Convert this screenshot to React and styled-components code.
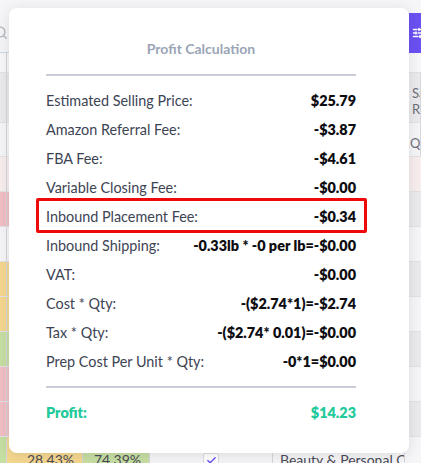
import React from 'react'
import styled, { createGlobalStyle } from 'styled-components'
import { Search, SlidersHorizontal, Check } from 'lucide-react'

const GlobalStyle = createGlobalStyle`
  html, body {
    margin: 0;
    padding: 0;
    background: #f5f5f7;
  }
  body {
    font-family: Lato, "Noto Sans", Arial, sans-serif;
  }
`

const Page = styled.div`
  position: relative;
  width: 421px;
  height: 463px;
  overflow: hidden;
  background: #f6f6f8;
`

const TopBar = styled.div`
  height: 52px;
  display: flex;
  align-items: center;
  justify-content: space-between;
  border-bottom: 1px solid #cdd5e8;
  color: #b9bcc4;
`

const SearchIcon = styled.div`
  margin-left: -7px;
  margin-top: 12px;
  display: flex;
`

const FilterButton = styled.div`
  align-self: flex-end;
  width: 40px;
  height: 40px;
  margin-right: -28px;
  margin-bottom: -1px;
  background: #6b50f3;
  display: flex;
  align-items: center;
  padding-left: 3px;
  box-sizing: border-box;
  color: #fff;
`

const Row = styled.div`
  display: grid;
  grid-template-columns: 7px 76px 67px 123px 132px 1fr;
  height: ${({ h }) => h || 35}px;
  box-sizing: border-box;
  border-bottom: 1px solid #e2e2e6;
  background: ${({ bg }) => bg || '#f6f6f8'};
`

const Cell = styled.div`
  background: ${({ bg }) => bg || 'transparent'};
  border-right: 1px solid #d6d6db;
  display: flex;
  align-items: center;
  justify-content: ${({ align }) => align || 'flex-start'};
  padding: 6px 8px 0 ${({ pl }) => pl ?? 8}px;
  box-sizing: border-box;
  font-size: 14px;
  color: #4a4a55;
  white-space: nowrap;
  overflow: hidden;
  line-height: 16px;
  &:first-child {
    padding: 0;
  }
`

const HeadText = styled.div`
  font-size: 13px;
  color: #6d6f78;
  line-height: 16px;
`

const CheckBox = styled.div`
  width: 14px;
  height: 14px;
  border: 1px solid #dcdce2;
  border-radius: 2px;
  display: flex;
  align-items: center;
  justify-content: center;
  color: #6b50f3;
  background: #fff;
  margin-top: 2px;
`

const Card = styled.div`
  position: absolute;
  left: 9px;
  top: 8px;
  width: 400px;
  height: 445px;
  box-sizing: border-box;
  padding: 31px 53px 0 37px;
  background: #fff;
  border-radius: 8px;
  box-shadow: 0 2px 14px rgba(30, 30, 50, 0.12);
`

const Title = styled.div`
  text-align: center;
  font-size: 14px;
  font-weight: 700;
  line-height: 20px;
  color: #9ba5b6;
`

const Divider = styled.div`
  height: 2px;
  background: #c8cdd7;
  margin: ${({ m }) => m};
`

const Line = styled.div`
  position: relative;
  display: flex;
  align-items: center;
  justify-content: space-between;
  height: 29px;
  font-size: 14.4px;
  color: ${({ accent }) => accent || '#3d4454'};
  font-weight: ${({ accent }) => (accent ? 800 : 400)};
`

const Value = styled.span`
  font-weight: 800;
  color: ${({ accent }) => accent || '#0d0d12'};
`

const Highlight = styled.div`
  position: absolute;
  left: -10px;
  right: -11px;
  top: -4px;
  bottom: -2px;
  border: 3px solid #ee0a0a;
  border-radius: 2px;
  pointer-events: none;
`

const fees = [
  ['Estimated Selling Price:', '$25.79'],
  ['Amazon Referral Fee:', '-$3.87'],
  ['FBA Fee:', '-$4.61'],
  ['Variable Closing Fee:', '-$0.00'],
  ['Inbound Placement Fee:', '-$0.34', true],
  ['Inbound Shipping:', '-0.33lb * -0 per lb=-$0.00'],
  ['VAT:', '-$0.00'],
  ['Cost * Qty:', '-($2.74*1)=-$2.74'],
  ['Tax * Qty:', '-($2.74* 0.01)=-$0.00'],
  ['Prep Cost Per Unit * Qty:', '-0*1=$0.00'],
]

const PINK = '#f1bfc4'
const YELLOW = '#f5d78f'
const GREEN = '#c6dfa2'
const GREY = '#ebebed'
const LIGHT = '#f6f6f8'

const rows = [
  { bg: '#f8eeee', c0: '#f8eeee' },
  { bg: GREY, c0: PINK },
  { bg: LIGHT, c0: LIGHT },
  { bg: GREY, c0: YELLOW },
  { bg: LIGHT, c0: YELLOW },
  { bg: GREY, c0: GREEN },
  { bg: LIGHT, c0: PINK },
  { bg: GREY, c0: PINK },
]

const App = () => {
  return (
    <>
      <GlobalStyle />
      <Page>
        <TopBar>
          <SearchIcon><Search size={15} strokeWidth={2.4} /></SearchIcon>
          <FilterButton><SlidersHorizontal size={12} strokeWidth={3} /></FilterButton>
        </TopBar>
        <Row h={20} bg="#f7f7f9">
          <Cell /><Cell /><Cell /><Cell /><Cell /><Cell />
        </Row>
        <Row h={50} bg={GREY}>
          <Cell /><Cell /><Cell /><Cell /><Cell />
          <Cell pl={7}><HeadText>Sales<br />Rank</HeadText></Cell>
        </Row>
        <Row h={34} bg={LIGHT}>
          <Cell /><Cell /><Cell /><Cell /><Cell />
          <Cell pl={5}><HeadText>Qty</HeadText></Cell>
        </Row>
        {rows.map((r, i) => (
          <Row key={i} bg={r.bg}>
            <Cell bg={r.c0} /><Cell bg={r.c0} /><Cell /><Cell /><Cell /><Cell />
          </Row>
        ))}
        <Row h={40} bg={LIGHT}>
          <Cell bg={GREEN} />
          <Cell bg={YELLOW} align="flex-end">28.43%</Cell>
          <Cell bg={GREEN} align="flex-end">74.39%</Cell>
          <Cell align="center"><CheckBox><Check size={11} strokeWidth={3} /></CheckBox></Cell>
          <Cell pl={7}>Beauty &amp; Personal Care</Cell>
          <Cell />
        </Row>

        <Card>
          <Title>Profit Calculation</Title>
          <Divider m="15px 0 10px" />
          {fees.map(([label, value, marked]) => (
            <Line key={label}>
              <span>{label}</span>
              <Value>{value}</Value>
              {marked && <Highlight />}
            </Line>
          ))}
          <Divider m="10px 0 10px" />
          <Line accent="#22c99a">
            <span>Profit:</span>
            <Value accent="#22c99a">$14.23</Value>
          </Line>
        </Card>
      </Page>
    </>
  )
}

export default App
